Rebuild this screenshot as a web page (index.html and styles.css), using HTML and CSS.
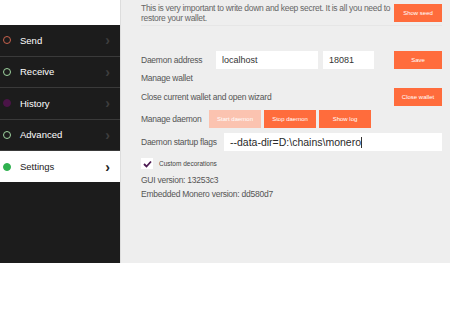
FILE: index.html
```html
<!DOCTYPE html>
<html lang="en">
<head>
    <meta charset="UTF-8">
    <title>Settings</title>
    <link rel="stylesheet" href="styles.css">
</head>
<body>
    <div class="app">
        <div class="sidebar">
            <div class="sidebar-top"></div>
            <div class="menu">
                <div class="menu-item">
                    <span class="dot dot-send"></span>
                    <span class="menu-label">Send</span>
                    <span class="chevron">&#8250;</span>
                </div>
                <div class="menu-item">
                    <span class="dot dot-receive"></span>
                    <span class="menu-label">Receive</span>
                    <span class="chevron">&#8250;</span>
                </div>
                <div class="menu-item">
                    <span class="dot dot-history"></span>
                    <span class="menu-label">History</span>
                    <span class="chevron">&#8250;</span>
                </div>
                <div class="menu-item">
                    <span class="dot dot-advanced"></span>
                    <span class="menu-label">Advanced</span>
                    <span class="chevron">&#8250;</span>
                </div>
                <div class="menu-item active">
                    <span class="dot dot-settings"></span>
                    <span class="menu-label">Settings</span>
                    <span class="chevron">&#8250;</span>
                </div>
            </div>
        </div>
        <div class="content">
            <div class="row seed-row">
                <p class="note">This is very important to write down and keep secret. It is all you need to<br>restore your wallet.</p>
                <button class="btn">Show seed</button>
            </div>
            <div class="divider"></div>
            <div class="row address-row">
                <span class="label">Daemon address</span>
                <input class="field host" type="text" value="localhost">
                <input class="field port" type="text" value="18081">
                <button class="btn">Save</button>
            </div>
            <div class="label line manage-wallet">Manage wallet</div>
            <div class="row close-row">
                <span class="label">Close current wallet and open wizard</span>
                <button class="btn">Close wallet</button>
            </div>
            <div class="row daemon-row">
                <span class="label">Manage daemon</span>
                <button class="btn btn-small disabled">Start daemon</button>
                <button class="btn btn-small">Stop daemon</button>
                <button class="btn btn-small">Show log</button>
            </div>
            <div class="row flags-row">
                <span class="label">Daemon startup flags</span>
                <div class="field flags">--data-dir=D:\chains\monero<span class="caret"></span></div>
            </div>
            <div class="row check-row">
                <span class="checkbox">
                    <svg width="9" height="8" viewBox="0 0 9 8"><path d="M1 4 L3.5 6.5 L8 1.5" fill="none" stroke="#4d1a52" stroke-width="1.8"/></svg>
                </span>
                <span class="check-label">Custom decorations</span>
            </div>
            <div class="label line gui-version">GUI version: 13253c3</div>
            <div class="label line">Embedded Monero version: dd580d7</div>
        </div>
    </div>
</body>
</html>
```

FILE: styles.css
```css
body {
    margin: 0;
    background: #ffffff;
    font-family: 'Liberation Sans', Arial, sans-serif;
}
.app {
    display: flex;
    width: 450px;
    height: 263px;
}
.sidebar {
    width: 120px;
    display: flex;
    flex-direction: column;
}
.sidebar-top {
    height: 25px;
    background: #ffffff;
}
.menu {
    flex: 1;
    background: #1c1c1c;
}
.menu-item {
    height: 30.5px;
    display: flex;
    align-items: center;
    border-bottom: 1px solid #3a3a3a;
    color: #ffffff;
    font-size: 9.5px;
    padding: 0 10px 0 3px;
}
.menu-item.active {
    background: #ffffff;
    color: #222222;
    border-bottom: none;
    height: 31px;
}
.dot {
    width: 6px;
    height: 6px;
    border-radius: 50%;
    border: 1.5px solid;
    margin-right: 9px;
}
.dot-send { border-color: #c8624d; }
.dot-receive { border-color: #9fd4a0; }
.dot-history { border-color: #4a1447; background: #4a1447; }
.dot-advanced { border-color: #9fd4a0; }
.dot-settings { border-color: #2fb14f; background: #2fb14f; }
.menu-label {
    flex: 1;
}
.chevron {
    color: #3e3e3e;
    font-size: 14px;
    font-weight: bold;
}
.menu-item.active .chevron {
    color: #222222;
}
.content {
    flex: 1;
    background: #eeeeee;
    border-left: 1px solid #dddddd;
    padding: 3px 8px 0 20px;
    color: #555555;
    font-size: 8.5px;
    letter-spacing: -0.25px;
}
.row {
    display: flex;
    align-items: center;
}
.note {
    margin: 0;
    flex: 1;
    min-width: 0;
    line-height: 10px;
    color: #666666;
    letter-spacing: -0.3px;
    white-space: nowrap;
}
.btn {
    background: #ff6c3c;
    color: #ffffff;
    border: none;
    font-family: 'Liberation Sans', Arial, sans-serif;
    font-size: 6px;
    letter-spacing: 0;
    width: 48px;
    height: 18px;
    padding: 0;
    margin-left: auto;
    flex-shrink: 0;
}
.seed-row .btn {
    margin-top: 1px;
    align-self: flex-start;
}
.divider {
    height: 1px;
    background: #e6e6e6;
    margin-top: 2px;
}
.address-row {
    margin-top: 25px;
}
.label {
    color: #555555;
    white-space: nowrap;
    flex-shrink: 0;
}
.address-row .label {
    width: 75px;
}
.field {
    height: 18px;
    border: none;
    background: #ffffff;
    font-family: 'Liberation Sans', Arial, sans-serif;
    font-size: 9px;
    letter-spacing: 0;
    color: #333333;
    padding: 0 0 0 6px;
    box-sizing: border-box;
    outline: none;
}
.host {
    width: 102px;
}
.port {
    width: 51px;
    margin-left: 5px;
}
.line {
    height: 10px;
    line-height: 10px;
}
.manage-wallet {
    margin-top: 4px;
}
.close-row {
    margin-top: 5px;
}
.daemon-row {
    margin-top: 4px;
}
.daemon-row .label {
    width: 68px;
}
.btn-small {
    width: 52px;
    margin-left: 0;
    margin-right: 3px;
}
.btn-small.disabled {
    background: #fbc3b0;
}
.flags-row {
    margin-top: 5px;
}
.flags-row .label {
    width: 83px;
}
.flags {
    flex: 1;
    display: flex;
    align-items: center;
    font-size: 10.5px;
    color: #2a2a2a;
}
.caret {
    width: 1px;
    height: 11px;
    background: #333333;
}
.check-row {
    margin-top: 7px;
}
.checkbox {
    width: 12px;
    height: 11px;
    background: #ffffff;
    display: flex;
    align-items: center;
    justify-content: center;
}
.check-label {
    font-size: 6.5px;
    letter-spacing: 0;
    color: #444444;
    margin-left: 6px;
}
.gui-version {
    margin-top: 6px;
}
.gui-version + .line {
    margin-top: 4px;
}
```
